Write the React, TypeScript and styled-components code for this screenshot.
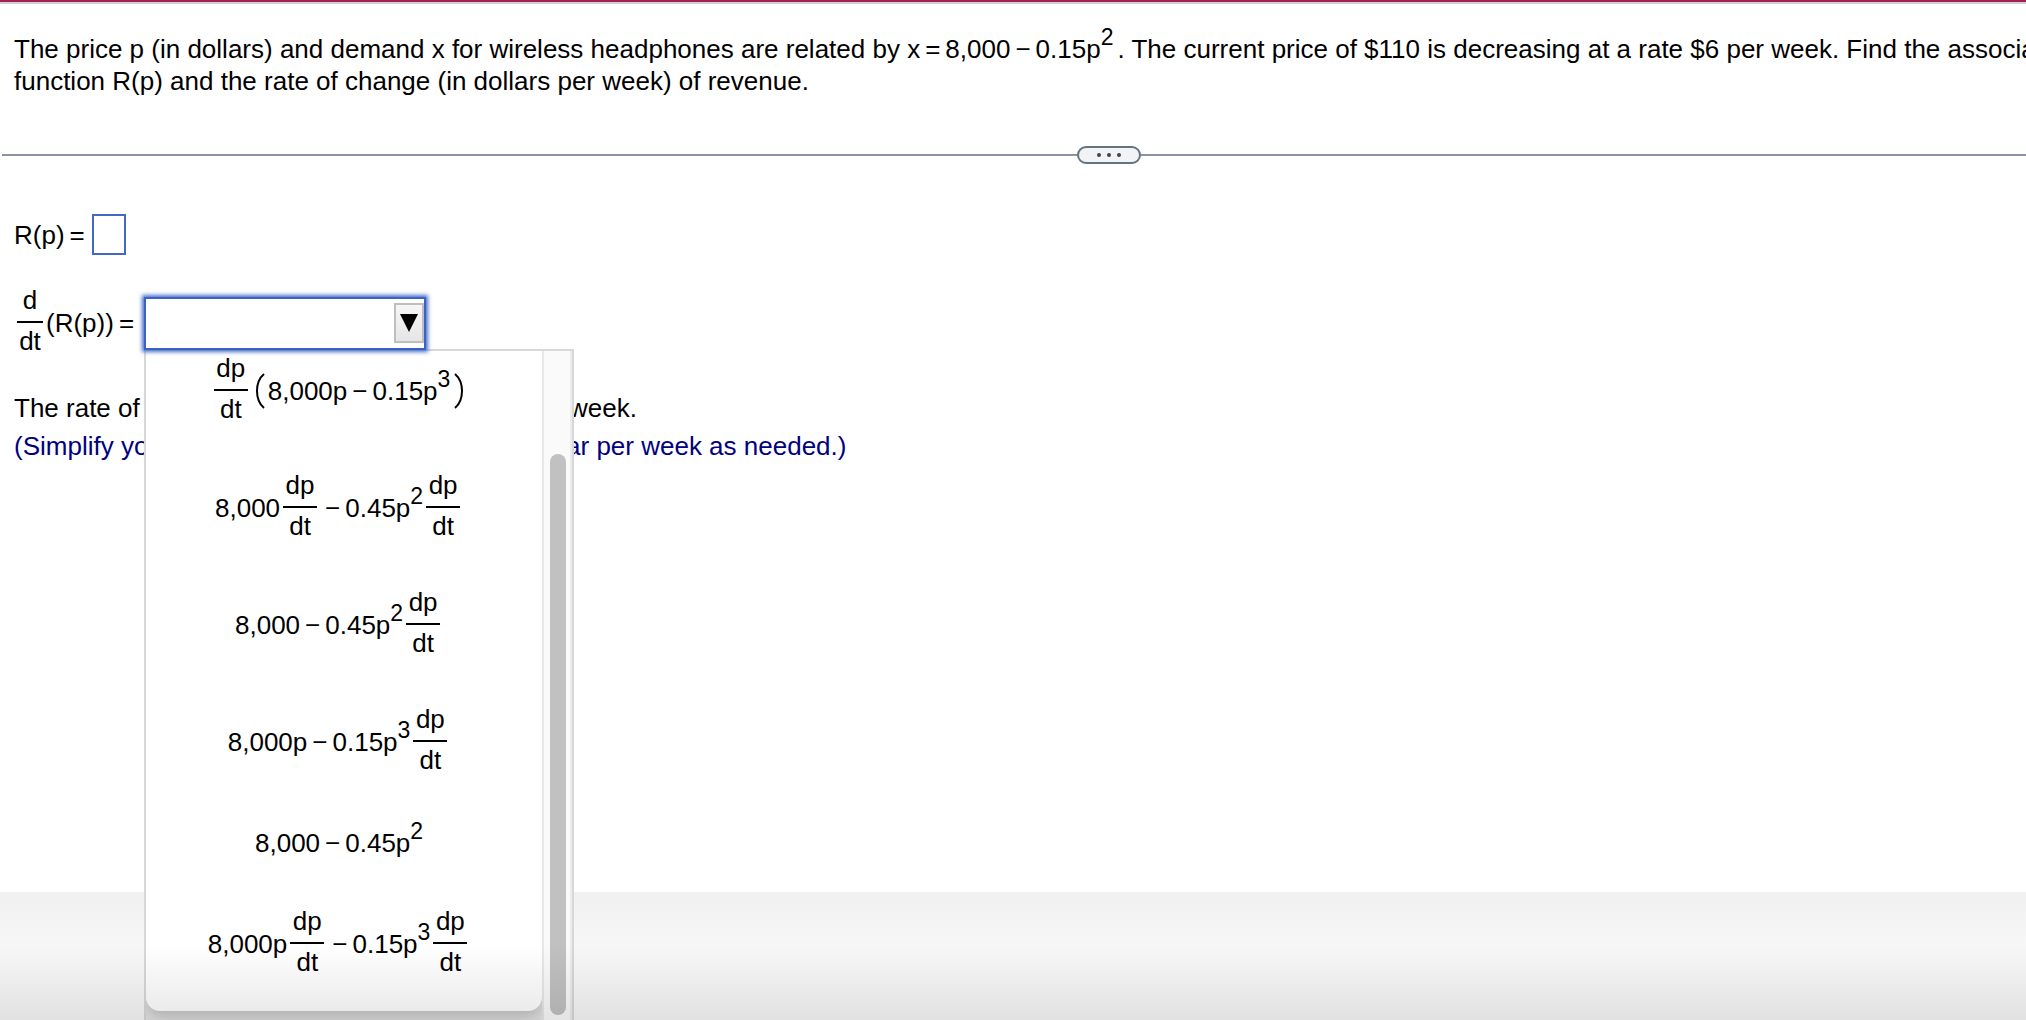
import React, { useState } from "react";
import styled, { createGlobalStyle } from "styled-components";

const GlobalStyle = createGlobalStyle`
  * { box-sizing: border-box; }
  body {
    margin: 0;
    background: #fff;
    color: #000;
    font-family: "Liberation Sans", Arial, Helvetica, sans-serif;
    font-size: 26px;
    line-height: 32px;
    overflow: hidden;
  }
`;

const Page = styled.div`
  min-height: 100vh;
  display: flex;
  flex-direction: column;
  border-top: 2px solid #a3244b;
  overflow: hidden;
`;

const Prompt = styled.header`
  border-top: 2px solid #cfd0dc;
  padding: 29px 14px 49px;
`;

const Line = styled.p`
  margin: 0;
  white-space: nowrap;
`;

const Sentence = styled.p<{ $note?: boolean }>`
  display: flex;
  align-items: center;
  margin: 0;
  line-height: 38px;
  color: ${(p) => (p.$note ? "#000080" : "inherit")};
  white-space: nowrap;
`;

const Operator = styled.span`
  margin: 0 5px;
`;

const Power = styled.sup<{ $gap?: number }>`
  font-size: 23px;
  line-height: 0;
  vertical-align: 13px;
  margin-right: ${(p) => p.$gap ?? 0}px;
`;

const Divider = styled.div`
  display: flex;
  align-items: center;
  margin-left: 2px;
`;

const Rule = styled.span<{ $grow: number }>`
  flex: ${(p) => p.$grow} 1 0;
  height: 2px;
  background: #8c92a4;
`;

const Handle = styled.button`
  display: flex;
  align-items: center;
  justify-content: center;
  gap: 6px;
  width: 64px;
  height: 18px;
  padding: 0;
  border: 2px solid #657383;
  border-radius: 9px;
  background: #f1f3f5;
`;

const Dot = styled.i`
  width: 4px;
  height: 4px;
  border-radius: 50%;
  background: #444;
`;

const Work = styled.main`
  flex: 1;
  padding: 50px 14px 0;
`;

const Row = styled.div<{ $gap: number }>`
  display: flex;
  align-items: center;
  margin-bottom: ${(p) => p.$gap}px;
`;

const Label = styled.label`
  display: flex;
  align-items: center;
  margin-right: 2px;
  white-space: nowrap;
`;

const AnswerBox = styled.input<{ $small?: boolean }>`
  width: 34px;
  height: ${(p) => (p.$small ? 32 : 41)}px;
  margin: 0 ${(p) => (p.$small ? 9 : 0)}px;
  padding: 0 4px;
  border: 2px solid #4267c4;
  font: inherit;
  outline: none;
`;

const Combo = styled.div`
  position: relative;
  width: 282px;
  margin-left: 3px;
`;

const Field = styled.select`
  appearance: none;
  position: relative;
  z-index: 1;
  display: block;
  width: 100%;
  height: 53px;
  padding: 0 40px 0 8px;
  border: 2px solid #3a62c4;
  border-radius: 0;
  background: #fff;
  box-shadow: 0 0 4px 2px #4a70cc;
  font: inherit;
  outline: none;
`;

const Arrow = styled.span`
  position: absolute;
  z-index: 1;
  top: 6px;
  right: 2px;
  display: flex;
  align-items: center;
  justify-content: center;
  width: 30px;
  height: 40px;
  border: 2px solid #bfbfbf;
  background: linear-gradient(#f6f6f6, #e6e6e6);
  pointer-events: none;
`;

const Menu = styled.div`
  position: absolute;
  top: 52px;
  left: 0;
  display: flex;
  align-items: flex-start;
  width: 430px;
  border: 2px solid #d8d8d8;
  background: #ececec;
  overflow: hidden;
`;

const Options = styled.ul`
  flex: 1;
  display: flex;
  flex-direction: column;
  gap: 39px;
  margin: 0;
  padding: 1px 10px 28px 0;
  list-style: none;
  background: #fff;
  border-radius: 0 0 14px 14px;
  box-shadow: 0 6px 16px rgba(0, 0, 0, 0.2);
`;

const Option = styled.li`
  display: flex;
  align-items: center;
  justify-content: center;
  min-height: 46px;
  white-space: nowrap;
  cursor: pointer;
`;

const Track = styled.div`
  position: relative;
  width: 30px;
  height: 680px;
  padding: 103px 4px 0 6px;
  border-left: 2px solid #e8e8e8;
  border-right: 2px solid #ececec;
  background: #fafafa;
`;

const Thumb = styled.div`
  height: 561px;
  border-radius: 8px;
  background: #c1c1c1;
`;

const Fraction = styled.span<{ $wide?: boolean }>`
  display: flex;
  flex-direction: column;
  width: ${(p) => (p.$wide ? 34 : 26)}px;
  margin: 0 3px;
  text-align: center;
`;

const Numerator = styled.span`
  padding-bottom: 5px;
  border-bottom: 2px solid #000;
`;

const Denominator = styled.span`
  padding: 2px 0 5px;
`;

const Paren = styled.svg`
  width: 10px;
  height: 36px;
  margin: 0 3px 0 4px;
  fill: none;
  stroke: #000;
  stroke-width: 2;
`;

const Footer = styled.footer`
  height: 128px;
  background: linear-gradient(#f0f0f0, #f8f8f8 50%);
`;

const BottomShade = styled.div`
  position: fixed;
  z-index: 2;
  inset: auto 0 0;
  height: 76px;
  background: linear-gradient(rgba(0, 0, 0, 0), rgba(0, 0, 0, 0.09));
  pointer-events: none;
`;

const Rate = ({ top = "dp" }: { top?: string }) => (
  <Fraction $wide={top.length > 1}>
    <Numerator>{top}</Numerator>
    <Denominator>dt</Denominator>
  </Fraction>
);

const Minus = () => <Operator>−</Operator>;

const choices = [
  {
    id: "a",
    view: (
      <>
        <Rate />
        <Paren viewBox="0 0 10 36"><path d="M9 1Q2 7 2 18T9 35" /></Paren>
        <span>8,000p<Minus />0.15p<Power>3</Power></span>
        <Paren viewBox="0 0 10 36"><path d="M1 1Q8 7 8 18T1 35" /></Paren>
      </>
    ),
  },
  { id: "b", view: <>8,000<Rate /><span><Minus />0.45p<Power>2</Power></span><Rate /></> },
  { id: "c", view: <><span>8,000<Minus />0.45p<Power>2</Power></span><Rate /></> },
  { id: "d", view: <><span>8,000p<Minus />0.15p<Power>3</Power></span><Rate /></> },
  { id: "e", view: <span>8,000<Minus />0.45p<Power>2</Power></span> },
  { id: "f", view: <>8,000p<Rate /><span><Minus />0.15p<Power>3</Power></span><Rate /></> },
];

export default function App() {
  const [value, setValue] = useState("");
  return (
    <>
      <GlobalStyle />
      <Page>
        <Prompt>
          <Line>
            The price p (in dollars) and demand x for wireless headphones are related by x<Operator>=</Operator>8,000
            <Minus />0.15p<Power $gap={4}>2</Power>. The current price of $110 is decreasing at a rate $6 per week. Find the associated revenue
          </Line>
          <Line>function R(p) and the rate of change (in dollars per week) of revenue.</Line>
        </Prompt>
        <Divider>
          <Rule $grow={1075} />
          <Handle aria-label="Resize panels"><Dot /><Dot /><Dot /></Handle>
          <Rule $grow={885} />
        </Divider>
        <Work>
          <Row $gap={29}>
            <Label htmlFor="revenue">R(p)<Operator>=</Operator></Label>
            <AnswerBox id="revenue" />
          </Row>
          <Row $gap={27}>
            <Label htmlFor="derivative"><Rate top="d" />(R(p))<Operator>=</Operator></Label>
            <Combo>
              <Field id="derivative" value={value} onChange={(e) => setValue(e.target.value)}>
                <option value="" />
              </Field>
              <Arrow>
                <svg width="18" height="18" viewBox="0 0 18 18"><path d="M0 0H18L9 18Z" /></svg>
              </Arrow>
              <Menu>
                <Options role="listbox" aria-label="Derivative">
                  {choices.map((c) => (
                    <Option key={c.id} role="option" aria-selected={value === c.id} onClick={() => setValue(c.id)}>
                      {c.view}
                    </Option>
                  ))}
                </Options>
                <Track><Thumb /></Track>
              </Menu>
            </Combo>
          </Row>
          <Sentence>
            The rate of change of revenue is
            <AnswerBox $small aria-label="Rate of change" />
            dollars per week.
          </Sentence>
          <Sentence $note>(Simplify your answer. Round to the nearest dollar per week as needed.)</Sentence>
        </Work>
        <Footer />
        <BottomShade />
      </Page>
    </>
  );
}
